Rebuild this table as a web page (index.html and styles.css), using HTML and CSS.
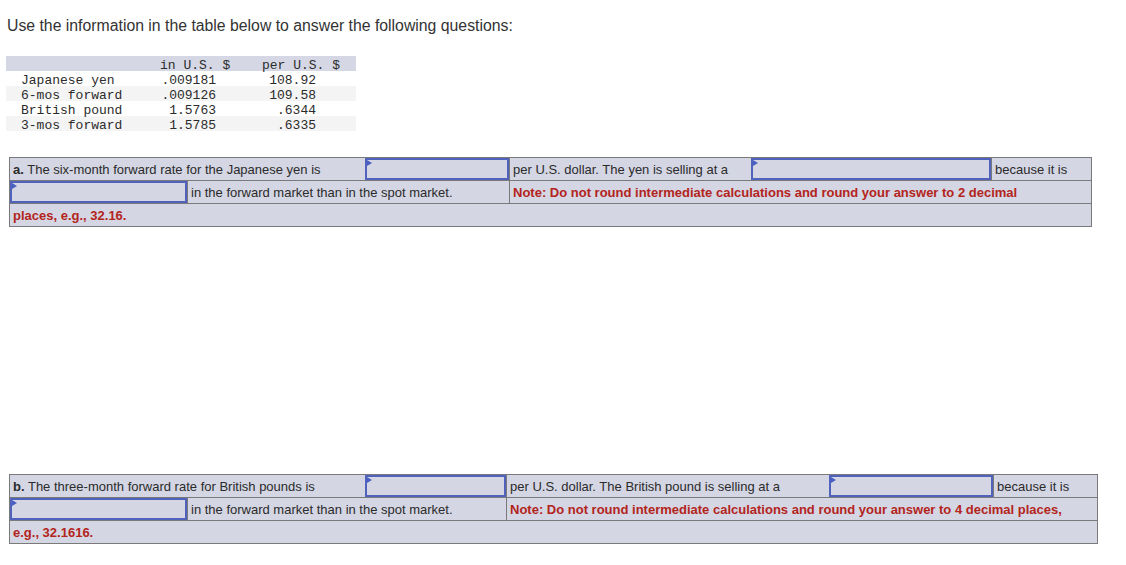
FILE: index.html
```html
<!DOCTYPE html>
<html>
<head>
<meta charset="utf-8">
<link rel="stylesheet" href="styles.css">
</head>
<body>
<p class="intro">Use the information in the table below to answer the following questions:</p>

<div class="rates">
  <div class="rrow head">
    <div class="lab"></div>
    <div class="c2h">in U.S. $</div>
    <div class="c3h">per U.S. $</div>
  </div>
  <div class="rrow">
    <div class="lab">Japanese yen</div>
    <div class="c2">.009181</div>
    <div class="c3">108.92</div>
  </div>
  <div class="rrow alt">
    <div class="lab">6-mos forward</div>
    <div class="c2">.009126</div>
    <div class="c3">109.58</div>
  </div>
  <div class="rrow">
    <div class="lab">British pound</div>
    <div class="c2">1.5763</div>
    <div class="c3">.6344</div>
  </div>
  <div class="rrow alt">
    <div class="lab">3-mos forward</div>
    <div class="c2">1.5785</div>
    <div class="c3">.6335</div>
  </div>
</div>

<div class="qbox qa">
  <div class="qrow">
    <div class="cell a1"><b>a.</b> The six-month forward rate for the Japanese yen is</div>
    <div class="inp a2"><span class="flag"></span></div>
    <div class="cell sep a3">per U.S. dollar. The yen is selling at a</div>
    <div class="inp a4"><span class="flag"></span></div>
    <div class="cell sep a5">because it is</div>
  </div>
  <div class="qrow line">
    <div class="inp r2in"><span class="flag"></span></div>
    <div class="cell sep a22">in the forward market than in the spot market.</div>
    <div class="cell sep note">Note: Do not round intermediate calculations and round your answer to 2 decimal</div>
  </div>
  <div class="qrow line">
    <div class="cell note">places, e.g., 32.16.</div>
  </div>
</div>

<div class="qbox qb">
  <div class="qrow">
    <div class="cell b1"><b>b.</b> The three-month forward rate for British pounds is</div>
    <div class="inp b2"><span class="flag"></span></div>
    <div class="cell sep b3">per U.S. dollar. The British pound is selling at a</div>
    <div class="inp b4"><span class="flag"></span></div>
    <div class="cell sep b5">because it is</div>
  </div>
  <div class="qrow line">
    <div class="inp r2in"><span class="flag"></span></div>
    <div class="cell sep b22">in the forward market than in the spot market.</div>
    <div class="cell sep note">Note: Do not round intermediate calculations and round your answer to 4 decimal places,</div>
  </div>
  <div class="qrow line">
    <div class="cell note">e.g., 32.1616.</div>
  </div>
</div>
</body>
</html>
```

FILE: styles.css
```css
* { box-sizing: border-box; }

body {
  margin: 0;
  background: #ffffff;
  font-family: "Liberation Sans", Arial, sans-serif;
  color: #2b2b2b;
}

.intro {
  margin: 0;
  padding: 17px 0 0 7px;
  height: 35px;
  font-size: 15.8px;
  line-height: 18px;
  color: #333333;
}

.rates {
  margin: 21px 0 0 6px;
  width: 350px;
  font-family: "Liberation Mono", "Courier New", monospace;
  font-size: 13px;
  color: #2b2b2b;
}

.rrow {
  display: flex;
  height: 15px;
  line-height: 17px;
  padding-top: 1px;
  white-space: pre;
}

.rrow.head { background: #d5d8e4; }
.rrow.alt { background: #f4f4f4; }

.lab { width: 145px; padding-left: 15px; }
.c2h { width: 95px; padding-left: 9px; }
.c3h { width: 110px; padding-left: 16px; }
.c2 { width: 95px; text-align: right; padding-right: 30px; }
.c3 { width: 110px; text-align: right; padding-right: 40px; }

.qbox {
  margin-left: 9px;
  border: 1px solid #7a7a7a;
  background: #d4d6e3;
  font-size: 13px;
}

.qa { margin-top: 26px; width: 1083px; }
.qb { margin-top: 247px; width: 1089px; }

.qrow {
  display: flex;
  height: 22px;
}

.qrow.line {
  height: 23px;
  border-top: 1px solid #7a7a7a;
}

.cell {
  line-height: 21px;
  padding: 1px 0 0 3px;
  white-space: nowrap;
  overflow: hidden;
}

.sep { border-left: 1px solid #7a7a7a; }

.note {
  color: #b3241c;
  font-weight: bold;
  flex: 1;
}

.inp {
  position: relative;
  height: 22px;
  border: 2px solid #5062bb;
}

.flag {
  position: absolute;
  left: 0;
  top: 0;
  width: 0;
  height: 0;
  border-left: 5px solid #4a5fc4;
  border-top: 3px solid transparent;
  border-bottom: 3px solid transparent;
}

.a1 { width: 355px; }
.a2 { width: 144px; }
.a3 { width: 242px; }
.a4 { width: 240px; }
.a5 { flex: 1; }
.r2in { width: 177px; }
.a22 { width: 322px; }

.b1 { width: 355px; }
.b2 { width: 141px; }
.b3 { width: 323px; }
.b4 { width: 164px; }
.b5 { flex: 1; }
.b22 { width: 319px; }
```
